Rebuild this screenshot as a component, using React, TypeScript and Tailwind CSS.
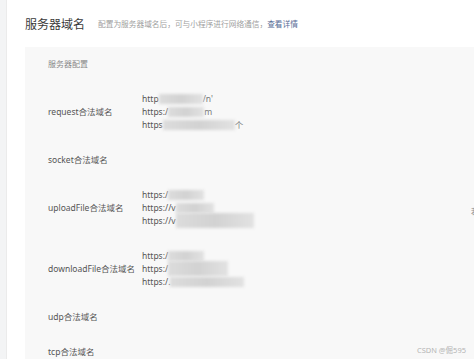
const font = "font-['Noto_Sans','Noto_Sans_CJK_SC',sans-serif]"

type Line = { text: string; blur: number; tail?: string; tall?: boolean }

const rows: { label: string; lines: Line[]; side?: string }[] = [
  {
    label: "request合法域名",
    lines: [
      { text: "http", blur: 44, tail: "/n'" },
      { text: "https:/", blur: 36, tail: "m" },
      { text: "https", blur: 72, tail: "个" },
    ],
  },
  { label: "socket合法域名", lines: [] },
  {
    label: "uploadFile合法域名",
    lines: [
      { text: "https:/", blur: 36 },
      { text: "https://v", blur: 38 },
      { text: "https://v", blur: 78, tall: true },
    ],
    side: "若",
  },
  {
    label: "downloadFile合法域名",
    lines: [
      { text: "https:/", blur: 36 },
      { text: "https:/", blur: 60, tall: true },
      { text: "https:/.", blur: 74 },
    ],
  },
  { label: "udp合法域名", lines: [] },
  { label: "tcp合法域名", lines: [] },
]

function Value({ line }: { line: Line }) {
  return (
    <div className="flex h-[13px] items-center leading-[13px]">
      <span>{line.text}</span>
      <span
        className={`inline-block bg-gradient-to-r from-[#dcdcdc] via-[#d2d2d2] to-[#e2e2e2] blur-[1.5px] ${line.tall ? "h-[15px]" : "h-[10px]"}`}
        style={{ width: line.blur }}
      />
      {line.tail && <span className="text-[#777]">{line.tail}</span>}
    </div>
  )
}

export default function App() {
  return (
    <div className={`relative flex h-[359px] w-[474px] overflow-hidden bg-white ${font}`}>
      {/* left rail */}
      <div className="w-[7px] shrink-0 border-r border-[#ebebeb] bg-[#f3f4f5]" />

      <div className="flex min-w-0 flex-1 flex-col pl-[18px] pt-[16px]">
        <div className="mb-[13px] flex h-[20px] items-center">
          <span className="text-[12px] text-[#3a3a3a]">服务器域名</span>
          <span className="ml-[13px] text-[7.7px] text-[#a0a0a0]">
            配置为服务器域名后，可与小程序进行网络通信，
            <span className="text-[#576b95]">查看详情</span>
          </span>
        </div>

        <div className="flex-1 bg-[#f8f8f8] text-[8.5px] text-[#555]">
          <div className="flex h-[34px] items-center pl-[23px] text-[8px] text-[#888]">服务器配置</div>

          {rows.map((r) => (
            <div key={r.label} className="flex items-center py-[11px] pl-[23px]">
              <div className="w-[94px] shrink-0 leading-[13px]">{r.label}</div>
              <div className="flex flex-col">
                {r.lines.length === 0 ? (
                  <div className="h-[13px]" />
                ) : (
                  r.lines.map((l, i) => <Value key={i} line={l} />)
                )}
              </div>
              {r.side && <div className="ml-auto mr-[-4px] mt-[10px] text-[7px] text-[#888]">{r.side}</div>}
            </div>
          ))}
        </div>
      </div>

      <div className="absolute bottom-[3px] right-[8px] text-[7.5px] text-[#b5b5b5]">CSDN @倔595</div>
    </div>
  )
}
